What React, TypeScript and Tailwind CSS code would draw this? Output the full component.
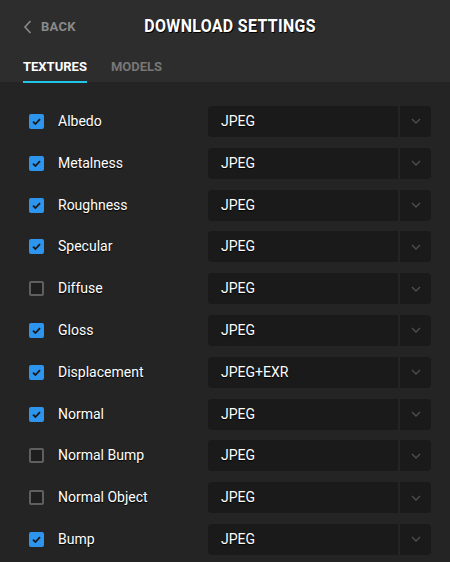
const ROWS: { name: string; checked: boolean; format: string }[] = [
  { name: "Albedo", checked: true, format: "JPEG" },
  { name: "Metalness", checked: true, format: "JPEG" },
  { name: "Roughness", checked: true, format: "JPEG" },
  { name: "Specular", checked: true, format: "JPEG" },
  { name: "Diffuse", checked: false, format: "JPEG" },
  { name: "Gloss", checked: true, format: "JPEG" },
  { name: "Displacement", checked: true, format: "JPEG+EXR" },
  { name: "Normal", checked: true, format: "JPEG" },
  { name: "Normal Bump", checked: false, format: "JPEG" },
  { name: "Normal Object", checked: false, format: "JPEG" },
  { name: "Bump", checked: true, format: "JPEG" },
];

function Checkbox({ checked }: { checked: boolean }) {
  if (checked) {
    return (
      <div className="flex h-[15px] w-[15px] shrink-0 items-center justify-center rounded-[2px] bg-[#2d95ee]">
        <svg width="9" height="7" viewBox="0 0 9 7" fill="none">
          <path d="M1 3.6 3.4 6 8 1.2" stroke="#1a1a1a" strokeWidth="1.8" />
        </svg>
      </div>
    );
  }
  return <div className="h-[15px] w-[15px] shrink-0 rounded-[2px] border-2 border-[#5f5f5f] bg-[#1e1e1e]" />;
}

function Row({ name, checked, format }: { name: string; checked: boolean; format: string }) {
  return (
    <div className="flex h-[41.8px] items-center pl-[29px] pr-[19px]">
      <Checkbox checked={checked} />
      <span className="ml-[14px] w-[150px] shrink-0 text-[14px] text-white [text-shadow:0_1px_1px_#000]">
        {name}
      </span>
      <div className="flex h-[31px] flex-1 overflow-hidden rounded-[4px] bg-[#1a1a1a]">
        <div className="flex flex-1 items-center pl-[13px] text-[14px] text-white [text-shadow:0_1px_1px_#000]">
          {format}
        </div>
        <div className="w-[2px] bg-[#242424]" />
        <div className="flex w-[31px] items-center justify-center">
          <svg width="10" height="6" viewBox="0 0 10 6" fill="none">
            <path d="M1 1l4 4 4-4" stroke="#4d4d4d" strokeWidth="1.4" />
          </svg>
        </div>
      </div>
    </div>
  );
}

export default function App() {
  return (
    <div className="h-[562px] w-[450px] overflow-hidden bg-[#242424] font-['Roboto',sans-serif]">
      <div className="h-[82px] bg-[#2d2d2d]">
        <div className="relative flex h-[50px] items-center">
          <div className="absolute left-[23px] top-[17px] flex items-center">
            <svg width="9" height="14" viewBox="0 0 9 14" fill="none">
              <path d="M7.5 1 2 7l5.5 6" stroke="#8a8a8a" strokeWidth="1.6" />
            </svg>
            <span className="ml-[9px] text-[13px] font-bold tracking-[0.02em] text-[#8a8a8a]">BACK</span>
          </div>
          <div className="w-full pl-[11px] pt-[2px] text-center">
            <span className="inline-block origin-center scale-x-[0.84] text-[19px] font-bold tracking-[0.02em] text-white [text-shadow:1px_1px_0_#000]">
              DOWNLOAD SETTINGS
            </span>
          </div>
        </div>
        <div className="flex gap-[24px] pl-[23px] pt-[8px]">
          <div className="flex flex-col">
            <span className="text-[13px] font-bold leading-[18px] text-white">TEXTURES</span>
            <div className="mt-[5px] h-[2px] bg-[#1fc6e8]" />
          </div>
          <span className="text-[13px] font-bold leading-[18px] text-[#777777]">MODELS</span>
        </div>
      </div>
      <div className="pt-[18.6px]">
        {ROWS.map((r) => (
          <Row key={r.name} {...r} />
        ))}
      </div>
    </div>
  );
}
